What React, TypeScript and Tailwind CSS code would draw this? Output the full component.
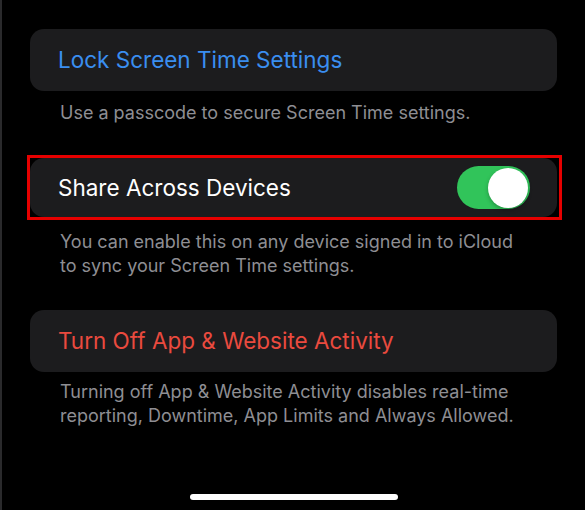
import { useState } from "react";

function Toggle({ on, onClick }: { on: boolean; onClick: () => void }) {
  return (
    <button
      type="button"
      onClick={onClick}
      className={
        on
          ? "flex items-center justify-end w-[73px] h-[43px] rounded-full bg-[#31c45a] p-[2px]"
          : "flex items-center justify-start w-[73px] h-[43px] rounded-full bg-[#39393d] p-[2px]"
      }
    >
      <span className="w-[40px] h-[40px] rounded-full bg-white shadow-[0_2px_4px_rgba(0,0,0,0.25)]" />
    </button>
  );
}

function Caption({ children }: { children: React.ReactNode }) {
  return (
    <p className="pl-[58px] pr-[30px] text-[18px] leading-[24px] text-[#8e8e93]">
      {children}
    </p>
  );
}

export default function App() {
  const [shared, setShared] = useState(true);

  return (
    <div
      className="w-[585px] h-[510px] bg-black border-l-2 border-[#2a2a2c] flex flex-col overflow-hidden"
      style={{ fontFamily: "Inter, 'Liberation Sans', sans-serif" }}
    >
      {/* Lock settings */}
      <div className="ml-[28px] mt-[29px] w-[527px] h-[62px] rounded-[14px] bg-[#1c1c1e] flex items-center pl-[28px]">
        <span className="text-[22.5px] text-[#3a8ef0]">Lock Screen Time Settings</span>
      </div>
      <div className="mt-[10px]">
        <Caption>Use a passcode to secure Screen Time settings.</Caption>
      </div>

      {/* Share across devices, highlighted */}
      <div className="ml-[25px] mt-[30px] w-[535px] h-[65px] border-[3px] border-[#e60000]">
        <div className="w-[527px] h-[59px] rounded-[14px] bg-[#1c1c1e] flex items-center justify-between pl-[28px] pr-[27px]">
          <span className="text-[22.5px] text-white">Share Across Devices</span>
          <Toggle on={shared} onClick={() => setShared((v) => !v)} />
        </div>
      </div>
      <div className="mt-[10px]">
        <Caption>
          You can enable this on any device signed in to iCloud
          <br />
          to sync your Screen Time settings.
        </Caption>
      </div>

      {/* Turn off activity */}
      <div className="ml-[28px] mt-[32px] w-[527px] h-[62px] rounded-[14px] bg-[#1c1c1e] flex items-center pl-[28px]">
        <span className="text-[22.5px] text-[#ea4a3e]">Turn Off App &amp; Website Activity</span>
      </div>
      <div className="mt-[8px]">
        <Caption>
          Turning off App &amp; Website Activity disables real-time
          <br />
          reporting, Downtime, App Limits and Always Allowed.
        </Caption>
      </div>

      <div className="flex-1" />
      <div className="mb-[10px] ml-[188px] w-[208px] h-[6px] rounded-full bg-white" />
    </div>
  );
}
